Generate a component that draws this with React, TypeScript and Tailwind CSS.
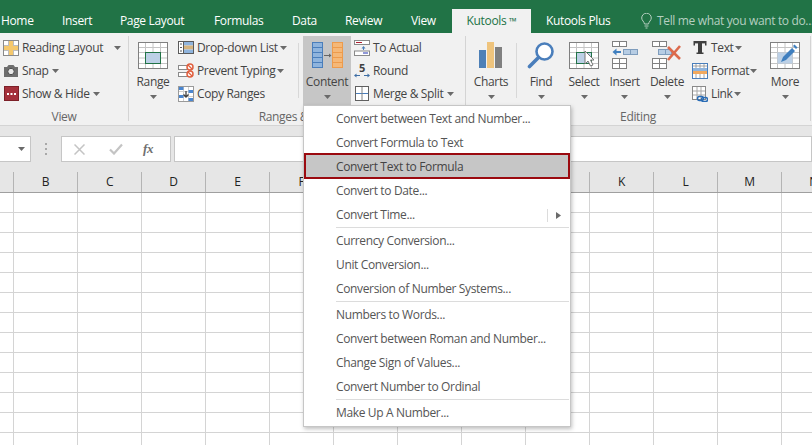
import type { ReactNode } from "react";

/* ─── Data ─────────────────────────────────────────────────────── */
const COLS = ["B", "C", "D", "E", "F", "G", "H", "I", "J", "K", "L", "M", "N"];
const ROWS = Array.from({ length: 13 }, (_, i) => i);

const MENU: { label: string; active?: boolean; sub?: boolean }[][] = [
  [
    { label: "Convert between Text and Number..." },
    { label: "Convert Formula to Text" },
    { label: "Convert Text to Formula", active: true },
    { label: "Convert to Date..." },
    { label: "Convert Time...", sub: true },
  ],
  [
    { label: "Currency Conversion..." },
    { label: "Unit Conversion..." },
    { label: "Conversion of Number Systems..." },
  ],
  [
    { label: "Numbers to Words..." },
    { label: "Convert between Roman and Number..." },
    { label: "Change Sign of Values..." },
    { label: "Convert Number to Ordinal" },
  ],
  [{ label: "Make Up A Number..." }],
];

/* ─── Small pieces ─────────────────────────────────────────────── */
function Caret({ className = "" }: { className?: string }) {
  return (
    <svg width="7" height="4" viewBox="0 0 7 4" className={`shrink-0 ${className}`}>
      <polygon points="0,0 7,0 3.5,4" fill="#6a6a6a" />
    </svg>
  );
}

function Large({ w, label, icon, hot }: { w: string; label: string; icon: ReactNode; hot?: boolean }) {
  return (
    <div className={`${w} ${hot ? "bg-[#c6c6c6]" : ""} h-[69px] flex flex-col items-center pt-[6px] shrink-0`}>
      <div className="h-[26px] flex items-start justify-center">{icon}</div>
      <div className="mt-[6px] h-4 leading-4">{label}</div>
      <Caret className="mt-[5px]" />
    </div>
  );
}

function Small({ icon, label, caretGap }: { icon: ReactNode; label: string; caretGap?: string }) {
  return (
    <div className="h-[23px] flex items-center whitespace-nowrap">
      <div className="w-4 h-4 shrink-0 flex items-center justify-center">{icon}</div>
      <span className="ml-[3px]">{label}</span>
      {caretGap && <Caret className={caretGap} />}
    </div>
  );
}

function Sep() {
  return <div className="w-px h-[55px] mt-[7px] bg-[#d8d8d8] shrink-0" />;
}

function Group({ w, label, children }: { w: string; label: string; children: ReactNode }) {
  return (
    <div className={`${w} h-[85px] border-r border-[#d4d4d4] shrink-0 flex flex-col`}>
      <div className="h-[69px] flex items-start">{children}</div>
      <div className="mt-1 h-3 leading-4 text-center text-[#666666]">{label}</div>
    </div>
  );
}

/* ─── Icons ────────────────────────────────────────────────────── */
function SelectionGrid({ border, children }: { border?: boolean; children?: ReactNode }) {
  return (
    <svg width="30" height="27" viewBox="0 0 30 27" className="overflow-visible">
      <rect x="0.5" y="0.5" width="29" height="26" fill="#fff" stroke="#808080" />
      <path d="M7.5 1v25M15 1v25M22.5 1v25M1 5.5h28M1 10.5h28M1 16h28M1 21.5h28" stroke="#c4c4c4" fill="none" />
      <rect x="7.5" y="10.5" width="15" height="11" fill="#bcd0e6" stroke={border ? "#217346" : "none"} />
      {children}
    </svg>
  );
}

function ContentIcon() {
  const rows = [0, 1, 2, 3, 4];
  return (
    <svg width="31" height="27" viewBox="0 0 31 27">
      {rows.map((r) => (
        <rect key={r} x="0.5" y={0.5 + r * 5} width="10" height="5" fill="#8fb4dd" stroke="#4a7ebb" />
      ))}
      {rows.map((r) => (
        <rect key={r} x="20.5" y={0.5 + r * 5} width="10" height="5" fill="#f5b878" stroke="#ed9b4c" />
      ))}
      <path d="M12 13.5h6" stroke="#666" />
      <path d="M17 11.5l2.5 2-2.5 2z" fill="#666" />
    </svg>
  );
}

function ChartsIcon() {
  return (
    <svg width="24" height="26" viewBox="0 0 24 26">
      <rect x="0" y="8" width="7" height="18" fill="#4d80b7" />
      <rect x="8" y="0" width="7" height="26" fill="#efc47d" />
      <rect x="16" y="5" width="7" height="21" fill="#808080" />
    </svg>
  );
}

function FindIcon() {
  return (
    <svg width="28" height="27" viewBox="0 0 28 27">
      <circle cx="17.5" cy="9.5" r="8" fill="#fff" stroke="#4a7ebb" strokeWidth="2.6" />
      <path d="M11.5 15.5L2.5 24.5" stroke="#4a7ebb" strokeWidth="3.6" strokeLinecap="round" />
    </svg>
  );
}

function InsertBoxes() {
  return (
    <>
      <rect x="0.5" y="0.5" width="7" height="5" fill="#fff" stroke="#808080" />
      <rect x="7.5" y="0.5" width="7" height="5" fill="#fff" stroke="#808080" />
      <rect x="0.5" y="17.5" width="7" height="5" fill="#fff" stroke="#808080" />
      <rect x="7.5" y="17.5" width="7" height="5" fill="#fff" stroke="#808080" />
      <rect x="0.5" y="22.5" width="7" height="5" fill="#fff" stroke="#808080" />
      <rect x="7.5" y="22.5" width="7" height="5" fill="#fff" stroke="#808080" />
    </>
  );
}

function InsertIcon() {
  return (
    <svg width="26" height="28" viewBox="0 0 26 28" className="-mt-px">
      <InsertBoxes />
      <rect x="11.5" y="8.5" width="7" height="5" fill="#b7cde4" stroke="#7f9dbd" />
      <rect x="18.5" y="8.5" width="7" height="5" fill="#b7cde4" stroke="#7f9dbd" />
      <path d="M3 11h6" stroke="#3f7fbf" strokeWidth="2" />
      <path d="M0.5 11l4-3.5v7z" fill="#3f7fbf" />
    </svg>
  );
}

function DeleteIcon() {
  return (
    <svg width="30" height="28" viewBox="0 0 30 28" className="-mt-px">
      <InsertBoxes />
      <rect x="6.5" y="8.5" width="7" height="5" fill="#b7cde4" stroke="#7f9dbd" />
      <rect x="13.5" y="8.5" width="6" height="5" fill="#b7cde4" stroke="#7f9dbd" />
      <path d="M16 6l12 12M28 5L16 19" stroke="#dc6a4c" strokeWidth="2.6" />
    </svg>
  );
}

function MoreIcon() {
  return (
    <SelectionGrid>
      <path d="M11 20l2-5 9-9 3 3-9 9z" fill="#3f7fbf" />
      <path d="M23 4l1.5-1.5 3 3L26 7z" fill="#3f7fbf" />
    </SelectionGrid>
  );
}

function ReadingIcon() {
  return (
    <svg width="16" height="16" viewBox="0 0 16 16">
      <rect x="0.5" y="0.5" width="15" height="15" fill="#fff" stroke="#8a8a8a" />
      <path d="M5.5 1v14M10.5 1v14M1 5.5h14M1 10.5h14" stroke="#bdbdbd" />
      <rect x="6" y="1" width="4" height="14" fill="#f5c86c" />
      <rect x="1" y="6" width="14" height="4" fill="#f5c86c" />
    </svg>
  );
}

function SnapIcon() {
  return (
    <svg width="16" height="14" viewBox="0 0 16 14">
      <path d="M1 3h3l1.5-2h5L12 3h3v10H1z" fill="#6e6e6e" />
      <circle cx="8" cy="7.5" r="3.2" fill="#e8e8e8" stroke="#4c4c4c" />
    </svg>
  );
}

function ShowHideIcon() {
  return (
    <svg width="15" height="15" viewBox="0 0 15 15">
      <rect x="0.5" y="0.5" width="14" height="14" fill="#a4303a" stroke="#7c2028" />
      <path d="M3 7h2v2H3zM6.5 7h2v2h-2zM10 7h2v2h-2z" fill="#fff" />
    </svg>
  );
}

function DropListIcon() {
  return (
    <svg width="16" height="13" viewBox="0 0 16 13">
      <rect x="0.5" y="0.5" width="15" height="12" fill="#fff" stroke="#5a5a5a" />
      <rect x="6" y="1" width="9" height="3.5" fill="#8fb4dd" />
      <rect x="6" y="4.5" width="9" height="4" fill="#d5b47f" />
      <rect x="6" y="8.5" width="9" height="3.5" fill="#8fb4dd" />
      <path d="M5.5 1v11" stroke="#5a5a5a" />
      <path d="M2 3h2M2 6.5h2M2 10h2" stroke="#5a5a5a" />
    </svg>
  );
}

function PreventIcon() {
  return (
    <svg width="16" height="15" viewBox="0 0 16 15">
      <rect x="0.5" y="2.5" width="11" height="4" fill="#fff" stroke="#8a8a8a" />
      <rect x="0.5" y="9.5" width="11" height="4" fill="#fff" stroke="#8a8a8a" />
      <circle cx="12" cy="4" r="3" fill="#fff" stroke="#e0603f" strokeWidth="1.5" />
      <path d="M10 2l4 4" stroke="#e0603f" strokeWidth="1.3" />
      <circle cx="12" cy="11" r="3" fill="#fff" stroke="#e0603f" strokeWidth="1.5" />
      <path d="M10 9l4 4" stroke="#e0603f" strokeWidth="1.3" />
    </svg>
  );
}

function CopyRangesIcon() {
  return (
    <svg width="16" height="16" viewBox="0 0 16 16">
      <rect x="0.5" y="0.5" width="15" height="15" fill="#fff" stroke="#9a9a9a" />
      <path d="M1 5.5h14M1 10.5h14M5.500 1v14M10.500 1v14" stroke="#d0d0d0" />
      <rect x="1" y="1" width="4.5" height="3" fill="#4a86d0" />
      <rect x="10.5" y="4" width="4.5" height="3" fill="#4a86d0" />
      <rect x="1" y="9" width="4.5" height="3" fill="#4a86d0" />
      <rect x="10.5" y="12" width="4.5" height="3" fill="#4a86d0" />
      <path d="M8 5v6M5.5 8.5L8 11l2.5-2.5" stroke="#404040" fill="none" strokeWidth="1.3" />
    </svg>
  );
}

function ToActualIcon() {
  return (
    <svg width="16" height="16" viewBox="0 0 16 16">
      <rect x="0.5" y="0.5" width="15" height="4" fill="#fff" stroke="#8a8a8a" />
      <path d="M2 2.500h6" stroke="#b02030" />
      <path d="M9.500 6l2 2.500h-4z" fill="#4a7ebb" />
      <path d="M9.500 8v2" stroke="#4a7ebb" />
      <rect x="0.5" y="11" width="15" height="4.5" fill="#fff" stroke="#8a8a8a" />
      <path d="M9 13h5" stroke="#2030b0" />
    </svg>
  );
}

function RoundIcon() {
  return (
    <svg width="16" height="16" viewBox="0 0 16 16">
      <text x="8" y="9" textAnchor="middle" fontSize="11" fontWeight="700" fill="#404040" fontFamily="Open Sans, sans-serif">5</text>
      <path d="M1 12.500h5M10 12.500h5" stroke="#3f6fa5" />
      <path d="M0 12.500l2.500-2v4zM16 12.500l-2.500-2v4z" fill="#3f6fa5" />
    </svg>
  );
}

function MergeIcon() {
  return (
    <svg width="14" height="15" viewBox="0 0 14 15">
      <rect x="0.5" y="0.5" width="13" height="14" fill="#fff" stroke="#606060" />
      <path d="M1 7.500h12" stroke="#4a7ebb" />
      <path d="M7 1v6.500M7 7.500V14" stroke="#808080" />
    </svg>
  );
}

function TextIcon() {
  return (
    <svg width="14" height="13" viewBox="0 0 14 13">
      <rect x="1" y="0" width="12" height="2.4" fill="#404040" />
      <rect x="5" y="0" width="4" height="12" fill="#404040" />
      <rect x="3.5" y="11.5" width="7" height="1.5" fill="#404040" />
      <rect x="0.5" y="0" width="1.5" height="4.5" fill="#404040" />
      <rect x="12" y="0" width="1.5" height="4.5" fill="#404040" />
    </svg>
  );
}

function FormatIcon() {
  return (
    <svg width="16" height="16" viewBox="0 0 16 16">
      <rect x="0.5" y="0.5" width="15" height="15" fill="#fff" stroke="#4a7ebb" />
      <rect x="1" y="5" width="14" height="3" fill="#8fb4dd" />
      <rect x="1" y="8" width="14" height="3" fill="#f2a95e" />
      <path d="M1 3h14M4 1v4M8 1v4M12 1v4M4 11v4M8 11v4M12 11v4" stroke="#909090" strokeWidth="0.8" />
    </svg>
  );
}

function LinkIcon() {
  return (
    <svg width="16" height="16" viewBox="0 0 16 16">
      <rect x="0.5" y="0.5" width="13" height="13" fill="#fff" stroke="#8a8a8a" />
      <path d="M5 1v12M9 1v12M1 5h12M1 9h12" stroke="#a8a8a8" />
      <rect x="5.5" y="10.5" width="6" height="4" rx="2" fill="none" stroke="#2a6cb5" strokeWidth="1.5" />
      <rect x="9.5" y="11.5" width="6" height="4" rx="2" fill="none" stroke="#2a6cb5" strokeWidth="1.5" />
    </svg>
  );
}

function BulbIcon() {
  return (
    <svg width="11" height="16" viewBox="0 0 11 16" fill="none" stroke="#b5cfc0">
      <path d="M3.5 11C3.2 8.5.7 7.5.7 5a4.8 4.8 0 0 1 9.6 0c0 2.500-2.500 3.500-2.800 6z" />
      <path d="M3.500 13h4M4.500 15h2" />
    </svg>
  );
}

/* ─── Ribbon ───────────────────────────────────────────────────── */
function Tabs() {
  const tabs = [
    ["Home", "w-[62px]"],
    ["Insert", "w-[58px]"],
    ["Page Layout", "w-[94px]"],
    ["Formulas", "w-[78px]"],
    ["Data", "w-[53px]"],
    ["Review", "w-[66px]"],
    ["View", "w-[41px]"],
  ];
  return (
    <div className="h-[33px] bg-[#217346] flex items-end text-white">
      {tabs.map(([name, w], i) => (
        <div key={name} className={`${w} h-6 leading-6 shrink-0 ${i === 0 ? "pl-px" : ""}`}>
          {name}
        </div>
      ))}
      <div className="w-[79px] h-6 leading-6 text-center bg-[#f1f1f1] text-[#217346] shrink-0">
        Kutools <span className="text-[10px]">™</span>
      </div>
      <div className="w-[110px] h-6 leading-6 pl-[15px] shrink-0">Kutools Plus</div>
      <div className="h-6 flex items-center text-[#b5cfc0] whitespace-nowrap">
        <BulbIcon />
        <span className="ml-[5px]">Tell me what you want to do...</span>
      </div>
    </div>
  );
}

function Ribbon() {
  return (
    <div className="h-[93px] bg-[#f1f1f1] border-b border-[#d4d4d4] flex items-start pt-[3px] text-[#444444]">
      <Group w="w-[129px]" label="View">
        <div className="pl-[3px]">
          <Small icon={<ReadingIcon />} label="Reading Layout" caretGap="ml-[11px]" />
          <Small icon={<SnapIcon />} label="Snap" caretGap="ml-[3px]" />
          <Small icon={<ShowHideIcon />} label="Show & Hide" caretGap="ml-[3px]" />
        </div>
      </Group>

      <Group w="w-[337px]" label="Ranges & Cells">
        <Large w="w-[48px]" label="Range" icon={<SelectionGrid border />} />
        <div className="w-[121px] pl-px shrink-0">
          <Small icon={<DropListIcon />} label="Drop-down List" caretGap="ml-[2px]" />
          <Small icon={<PreventIcon />} label="Prevent Typing" caretGap="ml-[2px]" />
          <Small icon={<CopyRangesIcon />} label="Copy Ranges" />
        </div>
        <Sep />
        <div className="w-1 shrink-0" />
        <Large w="w-[48px]" label="Content" icon={<ContentIcon />} hot />
        <div className="pl-[3px]">
          <Small icon={<ToActualIcon />} label="To Actual" />
          <Small icon={<RoundIcon />} label="Round" />
          <Small icon={<MergeIcon />} label="Merge & Split" caretGap="ml-[4px]" />
        </div>
      </Group>

      <Group w="w-[345px]" label="Editing">
        <Large w="w-[50px]" label="Charts" icon={<ChartsIcon />} />
        <Sep />
        <Large w="w-[48px]" label="Find" icon={<FindIcon />} />
        <Large
          w="w-[38px]"
          label="Select"
          icon={
            <SelectionGrid border>
              <path d="M16 9v13l3-3 2.500 5 2.500-1-2.500-5H25z" fill="#fff" stroke="#777" />
            </SelectionGrid>
          }
        />
        <Large w="w-[43px]" label="Insert" icon={<InsertIcon />} />
        <Large w="w-[42px]" label="Delete" icon={<DeleteIcon />} />
        <div className="w-[75px] pl-1 shrink-0">
          <Small icon={<TextIcon />} label="Text" caretGap="ml-[1px]" />
          <Small icon={<FormatIcon />} label="Format" caretGap="ml-[1px]" />
          <Small icon={<LinkIcon />} label="Link" caretGap="ml-[1px]" />
        </div>
        <Large w="w-[44px]" label="More" icon={<MoreIcon />} />
      </Group>
    </div>
  );
}

/* ─── Formula bar + sheet ──────────────────────────────────────── */
function FormulaBar() {
  return (
    <div className="h-[46px] bg-[#e6e6e6] flex items-start pt-[10px]">
      <div className="w-[31px] h-[26px] bg-white border border-l-0 border-[#c6c6c6] flex items-center justify-end pr-[5px] shrink-0">
        <Caret />
      </div>
      <div className="w-[30px] h-[26px] flex flex-col items-center justify-center gap-[3px] shrink-0">
        <div className="w-[2px] h-[2px] bg-[#a8a8a8]" />
        <div className="w-[2px] h-[2px] bg-[#a8a8a8]" />
        <div className="w-[2px] h-[2px] bg-[#a8a8a8]" />
      </div>
      <div className="w-[110px] h-[26px] bg-white border border-[#c6c6c6] flex items-center shrink-0">
        <div className="w-[36px] pl-[12px]">
          <svg width="11" height="11" viewBox="0 0 11 11">
            <path d="M0.500 0.500l10 10M10.500 0.500l-10 10" stroke="#c4c4c4" strokeWidth="1.500" />
          </svg>
        </div>
        <div className="w-[36px] pl-[11px]">
          <svg width="14" height="12" viewBox="0 0 14 12" fill="none">
            <path d="M1 6.500l4 4 8-9" stroke="#c4c4c4" strokeWidth="2.200" />
          </svg>
        </div>
        <div className="font-['Liberation_Serif',serif] italic font-bold text-[13px] text-[#707070] pl-[9px]">fx</div>
      </div>
      <div className="flex-1 ml-[3px] h-[26px] bg-white border border-[#c6c6c6]" />
    </div>
  );
}

function Sheet() {
  return (
    <div className="overflow-hidden">
      <div className="h-[21px] bg-[#e6e6e6] flex border-b border-[#9f9f9f] text-[#222222]">
        <div className="w-[14px] border-r border-[#b4b4b4] shrink-0" />
        {COLS.map((c) => (
          <div key={c} className="w-16 border-r border-[#b4b4b4] shrink-0 text-center leading-5">
            {c}
          </div>
        ))}
      </div>
      {ROWS.map((r) => (
        <div key={r} className="h-5 flex bg-white">
          <div className="w-[14px] border-r border-b border-[#d4d4d4] shrink-0" />
          {COLS.map((c) => (
            <div key={c} className="w-16 border-r border-b border-[#d4d4d4] shrink-0" />
          ))}
        </div>
      ))}
    </div>
  );
}

function ConvertMenu() {
  return (
    <div className="absolute left-[303px] top-[105px] z-10 w-[268px] h-[322px] bg-white border border-[#c6c6c6] shadow-[1px_2px_4px_rgba(0,0,0,0.25)] pt-px text-[#555555]">
      {MENU.map((group, g) => (
        <div key={g}>
          {g > 0 && (
            <div className="h-[2px] pl-[32px] pr-px">
              <div className="h-px bg-[#dcdcdc]" />
            </div>
          )}
          {group.map((it) =>
            it.active ? (
              <div
                key={it.label}
                className="relative h-[26px] -mt-[2px] pl-[30px] leading-[24px] bg-[#c6c6c6] border-2 border-[#9b0a10] text-[#444444]"
              >
                {it.label}
              </div>
            ) : (
              <div key={it.label} className="h-6 pl-[32px] leading-6 flex items-center">
                <span className="flex-1">{it.label}</span>
                {it.sub && (
                  <>
                    <div className="w-px h-[13px] bg-[#dcdcdc]" />
                    <svg width="5" height="7" viewBox="0 0 5 7" className="ml-[8px] mr-[9px]">
                      <polygon points="0,0 5,3.500 0,7" fill="#6a6a6a" />
                    </svg>
                  </>
                )}
              </div>
            )
          )}
        </div>
      ))}
    </div>
  );
}

export default function App() {
  return (
    <div className="relative w-[812px] h-[445px] overflow-hidden bg-white text-[12px] tracking-[-0.35px] font-['Open_Sans',sans-serif]">
      <Tabs />
      <Ribbon />
      <FormulaBar />
      <Sheet />
      <ConvertMenu />
    </div>
  );
}
